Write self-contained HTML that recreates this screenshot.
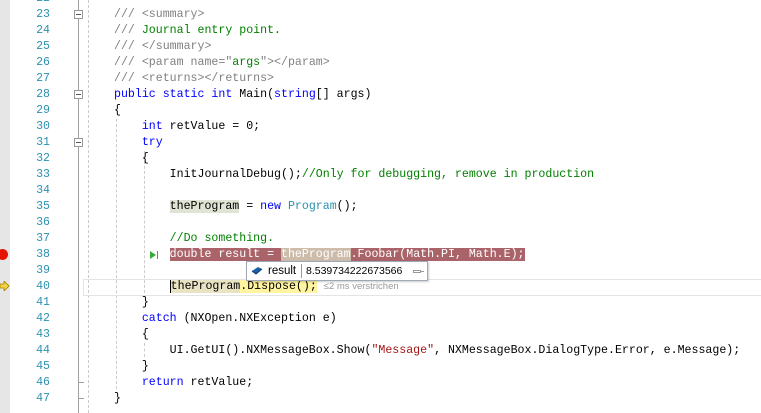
<!DOCTYPE html><html><head><style>
body{margin:0;width:761px;height:413px;overflow:hidden;background:#fff;position:relative;font-family:"Liberation Mono",monospace;font-size:11.6px}
.g{position:absolute;left:0;top:0;width:10px;height:413px;background:#e6e6e6}
.n{position:absolute;left:17px;width:33px;text-align:right;color:#2b91af;font-size:11.6px;line-height:16px}
.l{position:absolute;left:114px;line-height:16px;white-space:pre;color:#000}
.c{color:#008000}.k{color:#0000ff}.t{color:#2b91af}.s{color:#a31515}.gr{color:#808080}
.fold{position:absolute;left:74px;width:9px;height:9px;border:1px solid #999;background:#fff;box-sizing:border-box}
.fold:after{content:"";position:absolute;left:1px;top:3px;width:5px;height:1px;background:#555}
.v{position:absolute;border-left:1px dashed #ccc}
</style></head><body>
<div class="g"></div>
<div style="position:absolute;left:78px;top:0;width:1px;height:413px;background:#a0a0a0"></div>
<div class="v" style="left:88px;top:0;height:413px"></div>
<div class="v" style="left:116px;top:119px;height:270px"></div>
<div class="v" style="left:144px;top:151px;height:142px"></div>
<div class="v" style="left:144px;top:343px;height:14px"></div>
<div class="n" style="top:-9px">22</div>
<div class="n" style="top:7px">23</div><div class="n" style="top:23px">24</div><div class="n" style="top:39px">25</div><div class="n" style="top:55px">26</div><div class="n" style="top:71px">27</div><div class="n" style="top:87px">28</div><div class="n" style="top:103px">29</div><div class="n" style="top:119px">30</div><div class="n" style="top:135px">31</div><div class="n" style="top:151px">32</div><div class="n" style="top:167px">33</div><div class="n" style="top:183px">34</div><div class="n" style="top:199px">35</div><div class="n" style="top:215px">36</div><div class="n" style="top:231px">37</div><div class="n" style="top:247px">38</div><div class="n" style="top:263px">39</div><div class="n" style="top:279px">40</div><div class="n" style="top:295px">41</div><div class="n" style="top:311px">42</div><div class="n" style="top:327px">43</div><div class="n" style="top:343px">44</div><div class="n" style="top:359px">45</div><div class="n" style="top:375px">46</div><div class="n" style="top:391px">47</div>
<div class="fold" style="top:10px"></div><div class="fold" style="top:90px"></div><div class="fold" style="top:138px"></div>
<div style="position:absolute;left:79px;top:382px;width:5px;height:1px;background:#a0a0a0"></div>
<div style="position:absolute;left:79px;top:398px;width:5px;height:1px;background:#a0a0a0"></div>
<div style="position:absolute;left:-3px;top:249px;width:11px;height:11px;border-radius:50%;background:#e51400"></div>
<svg style="position:absolute;left:0;top:281px" width="10" height="10"><path d="M0 3h4V0l5 5-5 5V7H0z" fill="#f5d442" stroke="#a08000" stroke-width="0.8"/></svg>
<div style="position:absolute;left:83px;top:279px;width:690px;height:15px;border:1px solid #e4e4e4"></div>
<div class="l" style="top:7px"><span class="gr">/// &lt;summary&gt;</span></div>
<div class="l c" style="top:23px"><span class="gr">///</span> Journal entry point.</div>
<div class="l gr" style="top:39px">/// &lt;/summary&gt;</div>
<div class="l gr" style="top:55px">/// &lt;param name="<span class="c">args</span>"&gt;&lt;/param&gt;</div>
<div class="l gr" style="top:71px">/// &lt;returns&gt;&lt;/returns&gt;</div>
<div class="l" style="top:87px"><span class="k">public static int</span> Main(<span class="k">string</span>[] args)</div>
<div class="l" style="top:103px">{</div>
<div class="l" style="top:119px">    <span class="k">int</span> retValue = 0;</div>
<div class="l" style="top:135px">    <span class="k">try</span></div>
<div class="l" style="top:151px">    {</div>
<div class="l" style="top:167px">        InitJournalDebug();<span class="c">//Only for debugging, remove in production</span></div>
<div class="l" style="top:199px">        <span style="background:#e0e4d4">theProgram</span> = <span class="k">new</span> <span class="t">Program</span>();</div>
<div class="l" style="top:231px">        <span class="c">//Do something.</span></div>
<div class="l" style="top:247px;color:#fff">        <span style="background:#aa6469">double result = </span><span style="background:#cdbcaa">theProgram</span><span style="background:#aa6469">.Foobar(Math.PI, Math.E);</span></div>
<div style="position:absolute;left:150px;top:251px;width:0;height:0;border-left:6px solid #3aa83a;border-top:4px solid transparent;border-bottom:4px solid transparent"></div>
<div style="position:absolute;left:157px;top:251px;width:1px;height:8px;background:#3aa83a"></div>
<div class="l" style="top:279px">        <span style="background:#e8e3c3;border-left:1px solid #000">theProgram</span><span style="background:#fff4a0">.Dispose();</span> <span style="font-family:'Liberation Sans',sans-serif;font-size:9.5px;color:#999">≤2 ms verstrichen</span></div>
<div class="l" style="top:295px">    }</div>
<div class="l" style="top:311px">    <span class="k">catch</span> (NXOpen.NXException e)</div>
<div class="l" style="top:327px">    {</div>
<div class="l" style="top:343px">        UI.GetUI().NXMessageBox.Show(<span class="s">"Message"</span>, NXMessageBox.DialogType.Error, e.Message);</div>
<div class="l" style="top:359px">    }</div>
<div class="l" style="top:375px">    <span class="k">return</span> retValue;</div>
<div class="l" style="top:391px">}</div>
<div style="position:absolute;left:246px;top:261px;width:180px;height:18px;border:1px solid #a0a8b8;background:#fff;font-family:'Liberation Sans',sans-serif;font-size:11.5px;line-height:18px;box-shadow:1px 1px 2px rgba(0,0,0,.2)">
<svg style="position:absolute;left:4px;top:4px" width="12" height="10"><path d="M1 5l6-4 4 2-6 5z" fill="#1b5fa8"/><path d="M1 5l4 3 6-5" fill="none" stroke="#0c3d70"/></svg>
<span style="position:absolute;left:21px">result</span>
<span style="position:absolute;left:54px;top:2px;width:1px;height:14px;background:#999"></span>
<span style="position:absolute;left:59px;font-size:10.5px">8.539734222673566</span>
<span style="position:absolute;left:166px;top:8px;width:8px;height:3px;border:1px solid #999;box-sizing:border-box"></span>
<span style="position:absolute;left:173px;top:9px;width:4px;height:1px;background:#999"></span>
</div>
</body></html>
